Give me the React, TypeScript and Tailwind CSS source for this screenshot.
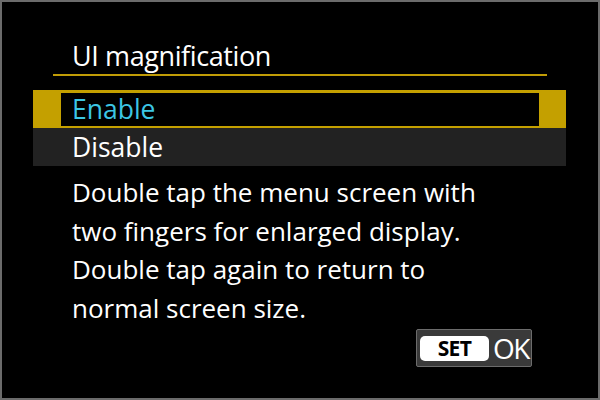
import React from "react";

const font = { fontFamily: '"Open Sans", "Noto Sans", sans-serif' };

function SetOkButton() {
  return (
    <div className="flex h-[38px] w-[116px] items-center rounded-[2px] border border-[#6c6c6c] bg-[#3a3a3a] pl-[3px]">
      <div className="flex h-[25px] w-[69px] items-center justify-center rounded-[5px] bg-white pt-[1px] text-[21px] font-bold leading-none text-black tracking-[-0.6px]">
        SET
      </div>
      <div className="ml-[4px] text-[28px] leading-none text-white tracking-[-1.5px]">OK</div>
    </div>
  );
}

export default function App() {
  return (
    <div
      className="h-[400px] w-[600px] overflow-hidden border-2 border-[#6b6b6b] bg-black text-white"
      style={font}
    >
      {/* Screen title with gold rule */}
      <div className="ml-[51px] mt-[35px] w-[494px] border-b-2 border-[#c09c06] pl-[19px] text-[27px] leading-[37px] tracking-[-0.4px]">
        UI magnification
      </div>

      {/* Option list */}
      <div className="ml-[31px] mt-[14px] w-[533px]">
        <div className="flex h-[38px] bg-[#c4a000] pb-[2px] pl-[28px] pr-[27px] pt-[3px]">
          <div className="flex-1 bg-black pl-[11px] text-[26.5px] leading-[33px] text-[#3cc6e4]">Enable</div>
        </div>
        <div className="h-[38px] bg-[#222222] pl-[39px] text-[26.5px] leading-[38px]">Disable</div>
      </div>

      {/* Help text */}
      <div className="ml-[70px] mt-[7px] text-[26px] leading-[38.5px]">
        <div>Double tap the menu screen with</div>
        <div>two fingers for enlarged display.</div>
        <div>Double tap again to return to</div>
        <div>normal screen size.</div>
      </div>

      <div className="ml-[414px] mt-[2px]">
        <SetOkButton />
      </div>
    </div>
  );
}
